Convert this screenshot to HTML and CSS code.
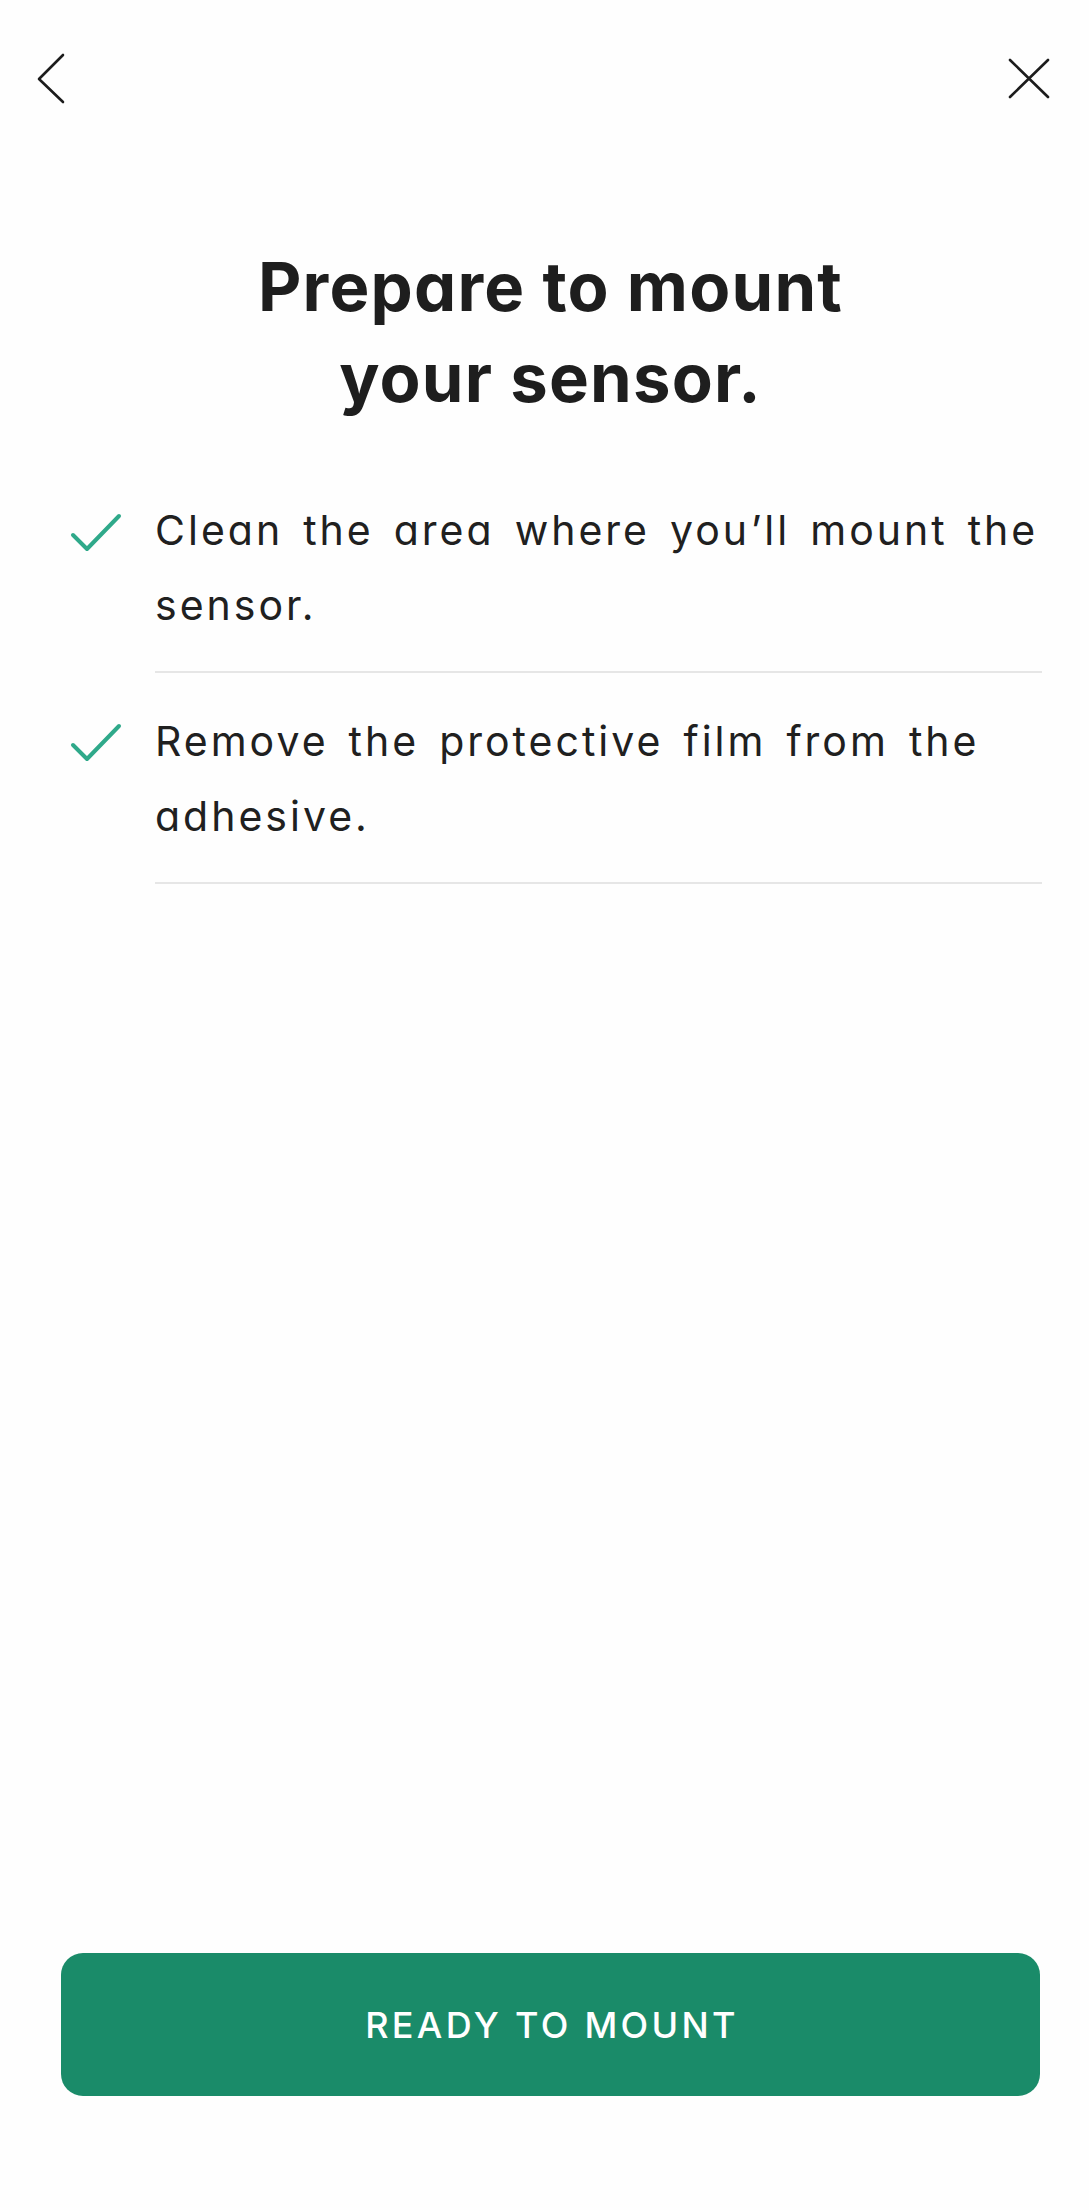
FILE: index.html
```html
<!DOCTYPE html>
<html lang="en">
<head>
<meta charset="utf-8">
<title>Prepare to mount your sensor</title>
<link rel="stylesheet" href="styles.css">
</head>
<body>
<div class="screen">
  <header class="topbar">
    <button class="icon-btn back" aria-label="Back">
      <svg width="30" height="52" viewBox="0 0 30 52"><path d="M27 3 L3 27 L27 50" fill="none" stroke="#1c1c1c" stroke-width="2.6" stroke-linecap="round" stroke-linejoin="round"/></svg>
    </button>
    <button class="icon-btn close" aria-label="Close">
      <svg width="44" height="44" viewBox="0 0 44 44"><path d="M3 3 L41 40 M41 3 L3 40" fill="none" stroke="#1c1c1c" stroke-width="2.6" stroke-linecap="round"/></svg>
    </button>
  </header>

  <main class="content">
    <h1 class="title">Prepare to mount<br>your sensor.</h1>
    <ul class="steps">
      <li class="step">
        <svg class="check" width="52" height="46" viewBox="0 0 52 46"><path d="M3 27 L17 41 L49 8" fill="none" stroke="#2fa98a" stroke-width="4" stroke-linecap="round" stroke-linejoin="round"/></svg>
        <div class="step-text">Clean the area where you’ll mount the sensor.</div>
      </li>
      <li class="step">
        <svg class="check" width="52" height="46" viewBox="0 0 52 46"><path d="M3 27 L17 41 L49 8" fill="none" stroke="#2fa98a" stroke-width="4" stroke-linecap="round" stroke-linejoin="round"/></svg>
        <div class="step-text">Remove the protective film from the adhesive.</div>
      </li>
    </ul>
  </main>

  <footer class="footer">
    <button class="primary-btn">READY TO MOUNT</button>
  </footer>
</div>
</body>
</html>
```
FILE: styles.css
```css
* { box-sizing: border-box; }

html, body {
  margin: 0;
  padding: 0;
  background: #fefefe;
}

body {
  font-family: "Inter", "Noto Sans", sans-serif;
  font-feature-settings: "cv11" 1;
  color: #202020;
}

.screen {
  width: 1089px;
  height: 2210px;
  display: flex;
  flex-direction: column;
}

.topbar {
  display: flex;
  justify-content: space-between;
  align-items: flex-start;
  padding: 52px 38px 0 36px;
}

.icon-btn {
  border: 0;
  background: none;
  padding: 0;
  margin: 0;
  display: block;
  line-height: 0;
}

.icon-btn svg { display: block; }

.close { margin-top: 5px; }

.content {
  display: flex;
  flex-direction: column;
}

.title {
  margin: 137px 0 0 0;
  padding-left: 12px;
  text-align: center;
  font-size: 67px;
  font-weight: 700;
  line-height: 91px;
  letter-spacing: 1.2px;
  color: #1e1e1e;
}

.steps {
  list-style: none;
  margin: 40px 0 0 0;
  padding: 0 47px 0 70px;
}

.step {
  display: flex;
  align-items: flex-start;
}

.check {
  flex: none;
  margin-top: 45px;
  margin-right: 33px;
}

.step-text {
  flex: 1;
  padding: 30px 0 28px;
  border-bottom: 2px solid #e6e6e6;
  font-size: 41px;
  line-height: 75px;
  font-weight: 400;
  letter-spacing: 3px;
  word-spacing: 5.5px;
  color: #202020;
}

.step + .step .step-text {
  padding-top: 31px;
}

.footer {
  margin-top: auto;
  padding: 0 49px 114px 61px;
}

.primary-btn {
  display: block;
  width: 100%;
  height: 143px;
  border: 0;
  border-radius: 22px;
  background: #1a8b69;
  color: #ffffff;
  font-family: "Inter", "Noto Sans", sans-serif;
  font-size: 36px;
  font-weight: 500;
  letter-spacing: 3.3px;
  padding: 0 0 0 3px;
}
```
